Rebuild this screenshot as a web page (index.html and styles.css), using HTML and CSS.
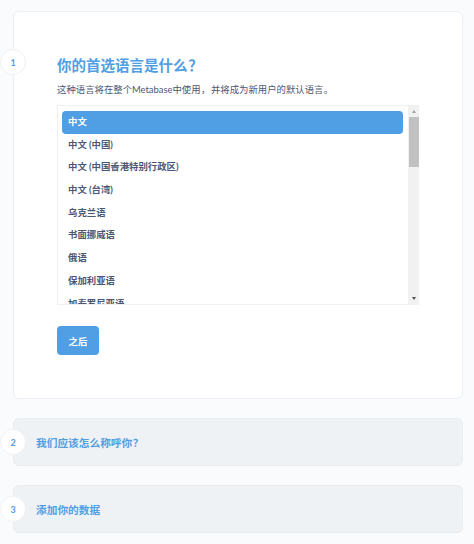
FILE: index.html
```html
<!DOCTYPE html>
<html lang="zh">
<head>
<meta charset="utf-8">
<title>Metabase 设置</title>
<link rel="stylesheet" href="styles.css">
</head>
<body>
<div class="page">
  <section class="card card-active">
    <div class="badge">1</div>
    <h1 class="title">你的首选语言是什么<span class="punct">？</span></h1>
    <p class="desc">这种语言将在整个Metabase中使用<span class="punct">，</span>并将成为新用户的默认语言<span class="punct">。</span></p>
    <div class="select">
      <div class="options">
        <div class="option selected">中文</div>
        <div class="option">中文 (中国)</div>
        <div class="option">中文 (中国香港特别行政区)</div>
        <div class="option">中文 (台湾)</div>
        <div class="option">乌克兰语</div>
        <div class="option">书面挪威语</div>
        <div class="option">俄语</div>
        <div class="option">保加利亚语</div>
        <div class="option">加泰罗尼亚语</div>
        <div class="option">匈牙利语</div>
      </div>
      <div class="scrollbar">
        <div class="arrow arrow-up"></div>
        <div class="thumb"></div>
        <div class="track-rest"></div>
        <div class="arrow arrow-down"></div>
      </div>
    </div>
    <button class="btn">之后</button>
  </section>
  <section class="card card-step">
    <div class="badge">2</div>
    <span class="step-title">我们应该怎么称呼你<span class="punct">？</span></span>
  </section>
  <section class="card card-step">
    <div class="badge">3</div>
    <span class="step-title">添加你的数据</span>
  </section>
</div>
</body>
</html>
```
FILE: styles.css
```css
* { box-sizing: border-box; }
html, body { margin: 0; padding: 0; }
body {
  background: #f9fbfc;
  font-family: Lato, "Noto Sans CJK SC", sans-serif;
  color: #4c5773;
  width: 474px;
  height: 544px;
  overflow: hidden;
}
.page {
  padding: 11px 11px 0 13px;
  display: flex;
  flex-direction: column;
  gap: 19px;
}
.card {
  position: relative;
  border-radius: 6px;
}
.card-active {
  background: #fff;
  border: 1px solid #eceff3;
  height: 388px;
  padding: 44px 0 0 43px;
}
.badge {
  position: absolute;
  left: -14px;
  width: 26px;
  height: 26px;
  border-radius: 50%;
  background: #fff;
  border: 1px solid #eef0f3;
  color: #509ee3;
  font-size: 9px;
  font-weight: 700;
  display: flex;
  align-items: center;
  justify-content: center;
}
.card-active .badge { top: 37px; }
.punct {
  display: inline-block;
  width: 1.1em;
  text-align: center;
}
.title {
  margin: 0;
  font-size: 14.5px;
  line-height: 20px;
  font-weight: 700;
  color: #509ee3;
}
.desc {
  margin: 7px 0 0;
  font-size: 9.4px;
  line-height: 14px;
  color: #4c5773;
}
.select {
  margin-top: 8px;
  width: 362px;
  height: 200px;
  display: flex;
  border: 1px solid #eef0f2;
  border-right: none;
  background: #fff;
}
.options {
  flex: 1;
  padding: 5px 5px 0 4px;
  overflow: hidden;
}
.option {
  height: 22.7px;
  line-height: 22.7px;
  padding-left: 6px;
  font-size: 9.4px;
  font-weight: 700;
  color: #4c5773;
  border-radius: 4px;
  white-space: nowrap;
}
.option.selected {
  background: #509ee3;
  color: #fff;
}
.scrollbar {
  width: 11px;
  background: #f1f1f1;
  display: flex;
  flex-direction: column;
  align-items: center;
}
.arrow {
  width: 0;
  height: 0;
  border-left: 2.5px solid transparent;
  border-right: 2.5px solid transparent;
}
.arrow-up {
  margin: 4px 0 4px;
  border-bottom: 3px solid #a3a3a3;
}
.thumb {
  width: 10px;
  height: 50px;
  background: #c1c1c1;
}
.track-rest { flex: 1; }
.arrow-down {
  margin: 4px 0 4px;
  border-top: 3px solid #505050;
}
.btn {
  display: block;
  margin-top: 21px;
  width: 42px;
  height: 29px;
  border: none;
  border-radius: 4px;
  background: #509ee3;
  color: #fff;
  font-family: Lato, "Noto Sans CJK SC", sans-serif;
  font-size: 9.4px;
  font-weight: 700;
  padding: 0;
}
.card-step {
  background: #eef2f5;
  border: 1px solid #e9edf0;
  height: 48px;
  padding-left: 22px;
  display: flex;
  align-items: center;
}
.card-step .badge {
  top: 50%;
  transform: translateY(-50%);
  border-color: #f1f3f5;
  color: #509ee3;
}
.step-title {
  font-size: 10.7px;
  font-weight: 700;
  color: #509ee3;
}
```
